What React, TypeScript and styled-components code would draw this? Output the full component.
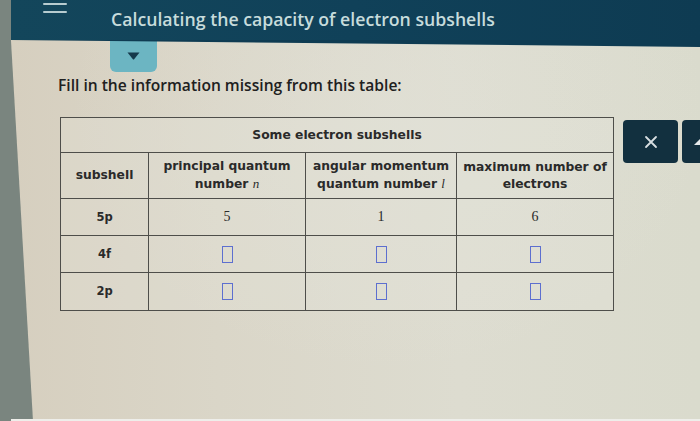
import React from "react";
import styled, { createGlobalStyle } from "styled-components";

const Global = createGlobalStyle`
  html, body { margin: 0; padding: 0; }
  body {
    width: 700px;
    height: 421px;
    overflow: hidden;
    background: #7b8680;
    font-family: "DejaVu Sans", Verdana, sans-serif;
  }
`;

const Frame = styled.div`
  display: flex;
  width: 700px;
  height: 421px;
`;

const Bezel = styled.div`
  width: 11px;
  flex: none;
  background: #7a857f;
`;

const Screen = styled.div`
  flex: 1;
  display: flex;
  flex-direction: column;
  background:
    radial-gradient(ellipse at 55% 25%, rgba(230, 230, 222, 0.35), rgba(230, 230, 222, 0) 60%),
    linear-gradient(90deg, #d6cfbf 0%, #dad6c8 30%, #dddcd0 65%, #dadbcd 100%);
  position: relative;
  overflow: hidden;
  &::before {
    content: "";
    position: absolute;
    left: 0;
    bottom: 0;
    width: 22px;
    height: 380px;
    background: #7a857f;
    clip-path: polygon(0 0, 0 100%, 100% 100%);
  }
  &::after {
    content: "";
    position: absolute;
    left: 0;
    right: 0;
    bottom: 0;
    height: 2px;
    background: #eeeeea;
  }
`;

const Header = styled.header`
  height: 40px;
  flex: none;
  display: flex;
  align-items: flex-start;
  background: linear-gradient(90deg, #13465b 0%, #104159 50%, #0e3b52 100%);
  position: relative;
  z-index: 1;
  &::after {
    content: "";
    position: absolute;
    top: 100%;
    left: 0;
    right: 0;
    height: 7px;
    background: #0e3b52;
    clip-path: polygon(0 0, 100% 0, 100% 100%);
  }
`;

const Burger = styled.div`
  margin: 3px 0 0 32px;
  width: 24px;
  display: flex;
  flex-direction: column;
  gap: 6px;
  span {
    display: block;
    height: 2px;
    border-radius: 1px;
    background: #b7ccd0;
  }
`;

const Title = styled.h1`
  margin: 7px 0 0 44px;
  font-family: "Open Sans", sans-serif;
  font-weight: 600;
  font-size: 17.7px;
  line-height: 24px;
  color: #c7dcdc;
`;

const TabRow = styled.div`
  display: flex;
  padding-left: 99px;
  height: 32px;
  flex: none;
`;

const Tab = styled.div`
  width: 47px;
  height: 32px;
  background: #6cb5c2;
  border-radius: 0 0 6px 6px;
  display: flex;
  align-items: center;
  justify-content: center;
`;

const Prompt = styled.p`
  margin: 3px 0 0 47px;
  font-family: "Open Sans", sans-serif;
  font-weight: 600;
  font-size: 15.6px;
  line-height: 21px;
  color: #202020;
`;

const Work = styled.div`
  display: flex;
  align-items: flex-start;
  margin: 21px 0 0 49px;
  gap: 9px;
`;

const Table = styled.table`
  border-collapse: collapse;
  width: 553px;
  table-layout: fixed;
  background: rgba(228, 228, 218, 0.3);
  color: #2a2a2a;
  td, th {
    border: 1px solid #4e4e4a;
    text-align: center;
    padding: 0;
    font-size: 12.3px;
    line-height: 17px;
  }
`;

const Caption = styled.th<{ $h: number }>`
  height: ${(p) => p.$h}px;
  font-weight: bold;
`;

const HeadCell = styled.th`
  height: 45px;
  font-weight: bold;
`;

const Cell = styled.td<{ $h: number }>`
  height: ${(p) => p.$h}px;
`;

const Label = styled.span`
  font-weight: bold;
  font-size: 11.5px;
`;

const Num = styled.span`
  font-family: "Liberation Serif", "Times New Roman", serif;
  font-size: 14px;
  color: #2a2a2a;
`;

const Var = styled.i`
  font-family: "Liberation Serif", "Times New Roman", serif;
  font-weight: normal;
  font-size: 13px;
`;

const Blank = styled.span`
  display: inline-block;
  width: 9px;
  height: 15px;
  border: 1.3px solid #5d6fcf;
  vertical-align: middle;
`;

const Buttons = styled.div`
  display: flex;
  gap: 4px;
  margin-top: 3px;
`;

const Btn = styled.button<{ $w: number; $pad: number }>`
  width: ${(p) => p.$w}px;
  height: 43px;
  flex: none;
  border: none;
  border-radius: 4px;
  background: #12303f;
  display: flex;
  align-items: center;
  justify-content: ${(p) => (p.$pad ? "flex-start" : "center")};
  padding: 0 0 0 ${(p) => p.$pad}px;
`;

const rows = [
  { s: "5p", v: ["5", "1", "6"], h: 36 },
  { s: "4f", v: null, h: 36 },
  { s: "2p", v: null, h: 37 },
];

export default function App() {
  return (
    <>
      <Global />
      <Frame>
        <Bezel />
        <Screen>
          <Header>
            <Burger>
              <span />
              <span />
            </Burger>
            <Title>Calculating the capacity of electron subshells</Title>
          </Header>
          <TabRow>
            <Tab>
              <svg width="13" height="8" viewBox="0 0 13 8">
                <path d="M0.5 0.5 H12.5 L7.3 7 Q6.5 8 5.7 7 Z" fill="#15394b" />
              </svg>
            </Tab>
          </TabRow>
          <Prompt>Fill in the information missing from this table:</Prompt>
          <Work>
            <Table>
              <colgroup>
                <col style={{ width: 88 }} />
                <col style={{ width: 157 }} />
                <col style={{ width: 151 }} />
                <col style={{ width: 157 }} />
              </colgroup>
              <thead>
                <tr>
                  <Caption colSpan={4} $h={34}>Some electron subshells</Caption>
                </tr>
                <tr>
                  <HeadCell>subshell</HeadCell>
                  <HeadCell>
                    principal quantum
                    <br />
                    number <Var>n</Var>
                  </HeadCell>
                  <HeadCell>
                    angular momentum
                    <br />
                    quantum number <Var>l</Var>
                  </HeadCell>
                  <HeadCell>
                    maximum number of
                    <br />
                    electrons
                  </HeadCell>
                </tr>
              </thead>
              <tbody>
                {rows.map((r) => (
                  <tr key={r.s}>
                    <Cell $h={r.h}>
                      <Label>{r.s}</Label>
                    </Cell>
                    {[0, 1, 2].map((i) => (
                      <Cell key={i} $h={r.h}>
                        {r.v ? <Num>{r.v[i]}</Num> : <Blank />}
                      </Cell>
                    ))}
                  </tr>
                ))}
              </tbody>
            </Table>
            <Buttons>
              <Btn $w={55} $pad={0} aria-label="close">
                <svg width="14" height="14" viewBox="0 0 14 14">
                  <path d="M2 2 L12 12 M12 2 L2 12" stroke="#d8dfe2" strokeWidth="1.8" strokeLinecap="round" />
                </svg>
              </Btn>
              <Btn $w={30} $pad={11} aria-label="more">
                <svg width="10" height="10" viewBox="0 0 10 10">
                  <path d="M1 8 L7 2 L9 8 Z" fill="#e4e8ea" />
                </svg>
              </Btn>
            </Buttons>
          </Work>
        </Screen>
      </Frame>
    </>
  );
}
